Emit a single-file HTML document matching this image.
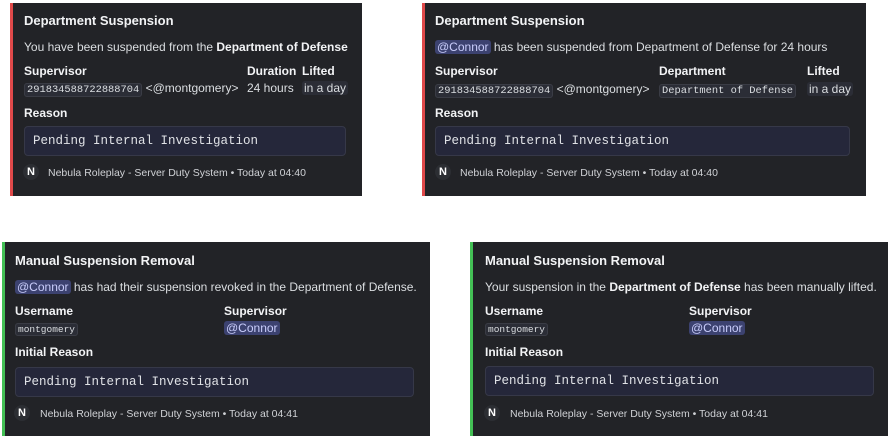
<!DOCTYPE html><html><head><style>
body{margin:0;width:890px;height:438px;background:#fff;position:relative;overflow:hidden;font-family:"Liberation Sans",sans-serif;color:#dbdee1}
.c{position:absolute;background:#222327;border-left:3px solid #e0494a;box-sizing:border-box}
.g{border-left-color:#43c055}
.t{position:absolute;white-space:nowrap;font-size:12px;line-height:14px}
.h{font-size:13px;font-weight:bold;color:#f2f3f5}
.b{font-weight:bold;color:#f2f3f5}
.m{font-family:"Liberation Mono",monospace;font-size:10.4px;background:#2b2d36;border:1px solid #3a3c45;border-radius:3px;padding:0 2px}
.p{background:#3c4270;color:#c9cdfb;border-radius:3px;padding:0 2px}
.box{position:absolute;background:#25273a;border:1px solid #363848;border-radius:4px;box-sizing:border-box;font-family:"Liberation Mono",monospace;font-size:12.5px;color:#e0e2e6;padding:7px 8px}
.f{font-size:10.5px;color:#d0d2d6}
.av{position:absolute;width:16px;height:16px;border-radius:50%;background:#2c2e33;color:#fff;font-size:11px;font-weight:bold;text-align:center;line-height:16px}
</style></head><body>
<div class="c" style="left:10px;top:3px;width:352px;height:193px"></div>
<div class="t h" style="left:24px;top:14px">Department Suspension</div>
<div class="t" style="left:24px;top:40px">You have been suspended from the <span class="b">Department of Defense</span></div>
<div class="t b" style="left:24px;top:64px">Supervisor</div>
<div class="t b" style="left:247px;top:64px">Duration</div>
<div class="t b" style="left:302px;top:64px">Lifted</div>
<div class="t" style="left:24px;top:81px"><span class="m">291834588722888704</span> &lt;@montgomery&gt;</div>
<div class="t" style="left:247px;top:81px">24 hours</div>
<div class="t" style="left:302px;top:81px"><span class="m" style="font-family:'Liberation Sans';font-size:12px;border:0">in a day</span></div>
<div class="t b" style="left:24px;top:106px">Reason</div>
<div class="box" style="left:24px;top:126px;width:322px;height:30px">Pending Internal Investigation</div>
<div class="av" style="left:23px;top:164px">N</div>
<div class="t f" style="left:48px;top:166px">Nebula Roleplay - Server Duty System • Today at 04:40</div>

<div class="c" style="left:422px;top:3px;width:444px;height:193px"></div>
<div class="t h" style="left:435px;top:14px">Department Suspension</div>
<div class="t" style="left:435px;top:40px"><span class="p">@Connor</span> has been suspended from Department of Defense for 24 hours</div>
<div class="t b" style="left:435px;top:64px">Supervisor</div>
<div class="t b" style="left:659px;top:64px">Department</div>
<div class="t b" style="left:807px;top:64px">Lifted</div>
<div class="t" style="left:435px;top:82px"><span class="m">291834588722888704</span> &lt;@montgomery&gt;</div>
<div class="t" style="left:659px;top:82px"><span class="m">Department of Defense</span></div>
<div class="t" style="left:807px;top:82px"><span class="m" style="font-family:'Liberation Sans';font-size:12px;border:0">in a day</span></div>
<div class="t b" style="left:435px;top:106px">Reason</div>
<div class="box" style="left:435px;top:126px;width:415px;height:30px">Pending Internal Investigation</div>
<div class="av" style="left:435px;top:164px">N</div>
<div class="t f" style="left:460px;top:166px">Nebula Roleplay - Server Duty System • Today at 04:40</div>

<div class="c g" style="left:2px;top:242px;width:428px;height:194px"></div>
<div class="t h" style="left:15px;top:254px">Manual Suspension Removal</div>
<div class="t" style="left:15px;top:280px"><span class="p">@Connor</span> has had their suspension revoked in the Department of Defense.</div>
<div class="t b" style="left:15px;top:304px">Username</div>
<div class="t b" style="left:224px;top:304px">Supervisor</div>
<div class="t" style="left:15px;top:321px"><span class="m" style="font-size:9.5px">montgomery</span></div>
<div class="t" style="left:224px;top:321px"><span class="p">@Connor</span></div>
<div class="t b" style="left:15px;top:345px">Initial Reason</div>
<div class="box" style="left:15px;top:367px;width:399px;height:30px">Pending Internal Investigation</div>
<div class="av" style="left:14px;top:405px">N</div>
<div class="t f" style="left:40px;top:407px">Nebula Roleplay - Server Duty System • Today at 04:41</div>

<div class="c g" style="left:470px;top:242px;width:418px;height:194px"></div>
<div class="t h" style="left:485px;top:254px">Manual Suspension Removal</div>
<div class="t" style="left:485px;top:280px">Your suspension in the <span class="b">Department of Defense</span> has been manually lifted.</div>
<div class="t b" style="left:485px;top:304px">Username</div>
<div class="t b" style="left:689px;top:304px">Supervisor</div>
<div class="t" style="left:485px;top:321px"><span class="m" style="font-size:9.5px">montgomery</span></div>
<div class="t" style="left:689px;top:321px"><span class="p">@Connor</span></div>
<div class="t b" style="left:485px;top:345px">Initial Reason</div>
<div class="box" style="left:485px;top:366px;width:389px;height:30px">Pending Internal Investigation</div>
<div class="av" style="left:484px;top:405px">N</div>
<div class="t f" style="left:510px;top:407px">Nebula Roleplay - Server Duty System • Today at 04:41</div>
</body></html>
